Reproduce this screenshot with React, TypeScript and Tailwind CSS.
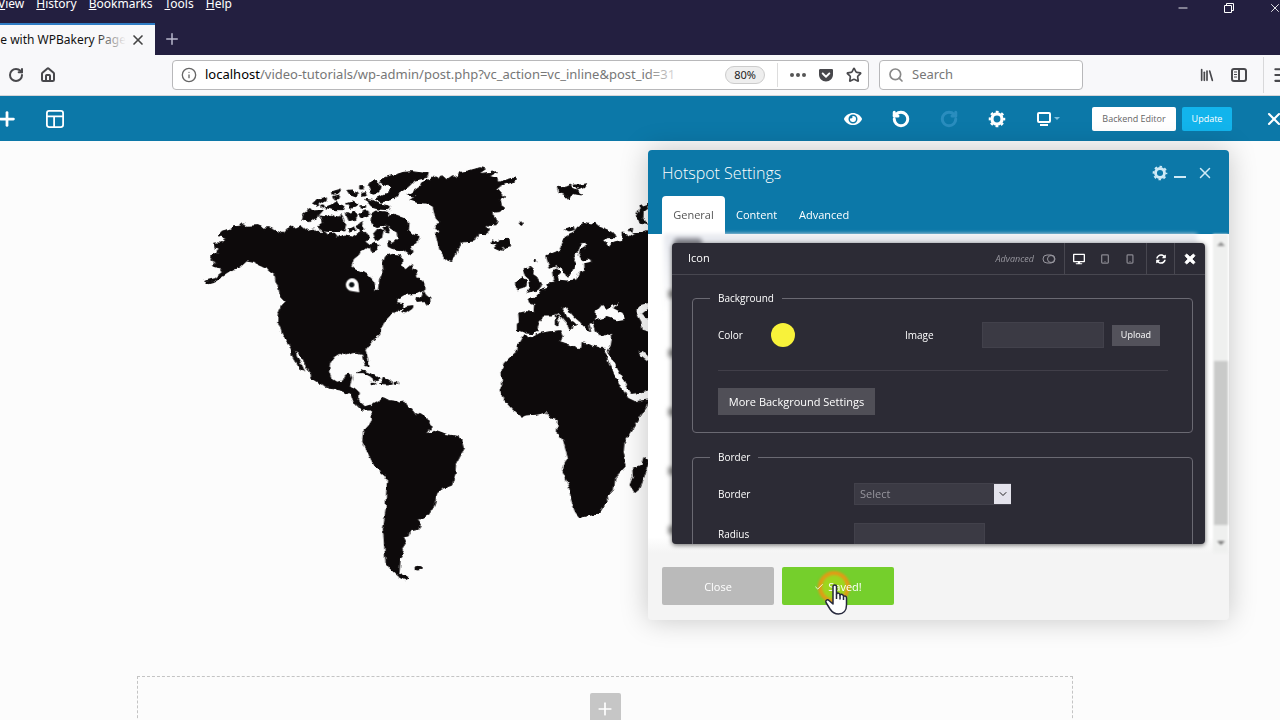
import React from 'react'
import { Check, ChevronDown, Home, Info, Library, Menu, Minus, Plus, RotateCcw, RotateCw, Search, Smartphone, Star, Tablet, X } from 'lucide-react'
import { FaDesktop, FaEye, FaGetPocket, FaSyncAlt, FaTimes } from 'react-icons/fa'

const menuItems = ['View', 'History', 'Bookmarks', 'Tools', 'Help']

const arcticIslands = [
  'M555 75L575 65L600 60L625 52L650 50L700 56L695 68L660 75L640 95L610 115L600 130L560 142L540 132L575 115L592 95L575 92L558 85Z',
  'M530 178L545 168L578 172L584 184L600 178L628 188L642 205L640 225L655 240L672 244L666 264L645 270L654 290L648 300L625 285L600 282L580 275L578 260L592 265L610 250L606 232L590 222L570 208L545 215L528 202Z',
  'M365 214L385 205L380 188L372 182L392 186L410 180L430 190L438 178L444 200L452 208L448 224L415 230L385 228Z',
  'M322 192L328 172L345 160L352 168L384 166L368 184L345 200L330 196Z',
  'M355 146L368 134L394 125L394 134L365 151Z',
  'M378 150L386 150L386 160L378 158Z',
  'M390 157L408 150L424 138L430 148L450 154L446 164L415 164Z',
  'M412 110L432 104L434 114L414 118Z',
  'M413 124L434 120L432 131L416 132Z',
  'M456 106L474 105L487 118L484 126L466 120Z',
  'M455 142L474 138L490 148L484 156L466 160Z',
  'M520 92L530 80L545 76L556 92L550 112L534 118L526 104Z',
  'M512 133L530 136L550 146L586 154L582 164L550 162L528 156Z',
  'M454 172L466 178L480 168L488 182L480 196L462 200Z',
  'M494 178L508 168L522 168L524 178L500 188Z',
  'M460 220L476 212L480 226L464 232Z',
  'M484 212L500 203L508 222L498 232L490 226Z',
  'M494 92L506 92L504 102L494 102Z',
  'M498 112L510 110L514 122L500 124Z',
  'M498 152L512 152L510 160L500 160Z',
  'M524 272L536 264L551 268L546 284L530 290Z',
  'M534 238L550 220L564 226L560 248L540 256Z',
  'M564 216L576 214L582 234L572 232Z',
]

function WorldMap() {
  return (
    <svg viewBox="600 480 1368 1290" className="block h-[430px] w-[456px]" role="img" aria-label="World map">
      <defs>
        <filter id="coast" x="-2%" y="-2%" width="104%" height="104%" colorInterpolationFilters="sRGB">
          <feTurbulence type="fractalNoise" baseFrequency="0.07" numOctaves="1" seed="4" result="noise" />
          <feDisplacementMap in="SourceGraphic" in2="noise" scale="15" xChannelSelector="R" yChannelSelector="G" />
        </filter>
      </defs>
      <g filter="url(#coast)" fill="#0d0a0b" stroke="#0d0a0b" strokeWidth="3" strokeLinejoin="round">
        {/* North America */}
        <g transform="translate(585 465)">
          <path d="M72 242L80 232L100 226L112 216L135 213L145 206L155 214L190 212L200 220L222 218L240 226L262 236L276 222L292 213L302 222L320 214L334 226L356 222L365 232L388 232L395 240L418 234L428 246L450 240L475 244L495 232L512 232L522 250L510 260L525 272L508 284L496 284L490 300L475 312L468 335L488 348L515 358L533 375L538 406L550 406L554 372L566 352L564 324L572 304L590 298L612 300L620 310L620 334L632 344L648 330L652 342L662 345L666 372L680 374L690 386L690 404L664 416L632 418L610 432L604 446L622 448L628 458L604 470L588 478L580 490L566 500L556 520L554 540L536 552L518 575L510 585L518 612L522 634L512 632L504 610L502 595L482 592L470 594L456 600L438 592L418 604L404 622L401 650L408 672L424 682L444 678L452 660L466 657L470 668L463 695L480 702L490 710L487 735L510 755L527 750L524 765L500 765L480 745L468 720L435 705L420 702L405 700L395 694L372 684L350 670L348 654L336 640L324 612L308 592L300 584L304 604L318 626L328 648L318 646L302 622L292 605L290 588L282 568L262 540L258 518L248 505L250 475L260 452L272 440L254 420L252 395L243 382L240 360L222 348L214 338L196 332L176 322L155 318L135 336L120 342L105 350L86 362L60 378L32 385L30 378L60 371L84 352L78 342L58 338L52 330L64 320L48 316L50 304L68 292L72 282L60 280L56 264L80 264L95 252Z" />
          <path d="M666 424L680 428L686 409L692 420L704 430L706 446L698 450L690 440L667 442Z" />
          <path d="M620 470L636 454L654 452L652 460L632 474Z" />
          {arcticIslands.map(d => <path key={d} d={d} />)}
        </g>
        {/* Central and South America */}
        <g transform="translate(1020 1110)">
          <path d="M92 108L105 98L120 92L130 83L148 92L165 94L175 99L195 96L202 108L218 122L228 137L240 130L258 142L270 160L273 172L260 192L276 186L282 180L295 184L322 194L350 199L368 213L373 235L360 256L347 280L345 310L335 346L310 354L290 370L285 395L276 418L264 436L248 446L232 447L242 460L235 478L208 483L205 498L190 500L198 517L183 540L190 552L180 570L178 600L175 618L155 600L138 580L135 540L130 480L138 420L140 370L143 330L135 315L105 290L90 260L78 235L68 215L70 185L88 165L97 150L95 125L80 112Z" />
          <path d="M175 614L190 612L205 622L195 629L178 622Z" />
          <path d="M225 592L240 588L248 594L238 599L226 600Z" />
          <path d="M52 8L65 2L85 8L104 18L120 28L108 32L90 18L70 8Z" />
          <path d="M116 40L130 34L132 25L146 30L158 39L140 42Z" />
          <path d="M90 37L104 37L104 44L92 44ZM163 37L173 37L173 43L163 43Z" />
          <path d="M912 262L925 275L915 310L900 355L885 368L870 345L880 320L878 295L905 285Z" />
        </g>
        {/* Greenland, Europe, Africa */}
        <g transform="translate(1200 465)">
          <path d="M22 120L45 106L60 95L68 82L92 72L104 62L118 72L126 62L140 74L158 62L176 68L182 52L205 48L240 38L256 42L236 56L292 50L268 64L290 70L294 82L345 68L345 78L304 90L292 100L314 126L300 134L304 150L316 158L298 170L276 172L278 184L294 196L288 210L268 208L258 216L272 224L258 236L235 235L220 258L180 262L170 290L155 320L135 312L120 285L108 240L118 222L104 222L108 208L122 205L108 190L100 160L88 145L54 143L30 135L48 124Z" />
          <path d="M272 264L280 254L290 262L302 254L328 253L332 272L310 278L305 286L282 276L288 270Z" />
          <path d="M472 96L484 98L500 96L512 90L516 102L530 104L545 120L522 116L514 122L506 135L492 118L476 112Z" />
          <path d="M522 90L540 90L562 86L554 98L534 104Z" />
          <path d="M358 206L362 197L370 204L364 212Z" />
          <path d="M385 432L410 424L425 405L445 398L440 388L462 385L480 376L500 378L530 375L538 352L555 345L554 326L578 321L560 312L548 318L538 300L540 286L562 272L556 262L542 264L535 285L518 305L526 325L515 350L500 364L490 344L470 332L450 340L444 320L440 302L466 292L480 284L490 260L498 242L520 232L534 215L550 205L575 210L584 201L600 215L640 233L648 248L622 248L612 256L628 276L640 262L668 255L666 234L678 236L684 246L700 236L720 235L744 226L780 228L780 700L744 705L720 712L695 715L680 690L658 650L640 615L625 590L634 570L638 540L618 536L600 540L585 525L580 500L566 506L572 530L556 518L540 500L526 488L510 470L495 452L487 462L500 486L530 510L516 512L512 528L504 508L488 490L474 474L455 480L432 480L418 500L410 526L400 536L380 534L366 528L352 525L352 508L358 498L356 474L380 470L402 473L404 450L388 442Z" />
          <path d="M380 340L392 334L400 342L398 358L410 366L424 392L414 404L382 412L392 396L386 386L394 378L376 362L370 346Z" />
          <path d="M350 378L368 368L380 376L370 400L350 405Z" />
          <path d="M458 352L470 338L480 350L472 366L476 380L462 382Z" />
          <path d="M466 480L474 480L476 492L468 496ZM466 496L476 498L474 512L466 512ZM402 318L408 312L410 322Z" />
          <path d="M744 148L722 155L708 185L720 205L742 208L728 190L730 170L744 160ZM496 222L520 214L522 224L506 228ZM688 222L698 220L696 232Z" />
          <path d="M375 538L384 548L400 546L420 535L450 530L480 527L487 545L480 560L510 570L532 580L545 580L546 562L570 570L600 580L618 580L614 592L628 630L648 670L664 700L684 730L705 740L745 735L740 755L720 785L690 835L672 865L670 890L678 935L645 970L640 1005L622 1024L624 1040L606 1056L592 1078L575 1080L540 1087L528 1073L515 1035L508 995L488 945L492 926L505 910L495 870L490 856L472 835L475 795L450 788L440 770L415 777L380 780L365 787L340 765L324 748L310 730L300 705L308 690L306 650L312 625L332 606L350 590L352 570Z" />
        </g>
        <g fill="#fcfcfc" stroke="none">
          {/* inland seas */}
          <path transform="translate(1200 465)" d="M586 496L588 468L606 446L620 462L655 444L640 460L668 474L674 492L650 496L620 486Z" />
          <path transform="translate(1200 465)" d="M706 468L722 450L744 444L748 458L726 476L744 490L750 530L728 524L724 500Z" />
          <path transform="translate(1200 465)" d="M716 590L728 588L750 610L744 618L724 602Z" />
          <path transform="translate(585 465)" d="M606 434L628 420L668 418L662 430L640 436L644 446L618 446Z" />
        </g>
      </g>
      {/* hotspot marker */}
      <g transform="translate(585 465)">
        <path d="M493 412L470 408A19 19 0 1 1 490 385Z" fill="#fff" />
        <circle cx="470" cy="389" r="8" fill="#0c1316" />
      </g>
    </svg>
  )
}

function Gear({ className }: { className: string }) {
  return (
    <svg viewBox="0 0 20 20" fill="none" stroke="currentColor" className={className} aria-hidden="true">
      <circle cx="10" cy="10" r="5.6" strokeWidth="3.6" />
      <circle cx="10" cy="10" r="8" strokeWidth="2.4" strokeDasharray="3.14" strokeDashoffset="1.57" />
    </svg>
  )
}

function Monitor() {
  return (
    <svg viewBox="0 0 16 16" className="size-4" fill="none" stroke="currentColor" strokeWidth="2" aria-hidden="true">
      <rect x="2" y="2" width="12" height="9" rx="1" />
      <path d="M4 14h8" />
    </svg>
  )
}

function BrowserChrome() {
  return (
    <header className="shrink-0 font-['Noto_Sans',sans-serif]">
      <div className="flex h-[23px] items-start justify-between bg-[#231f40] text-xs text-white">
        <nav className="-ml-0.5 flex gap-3 leading-[8px]">
          {menuItems.map(item => (
            <button key={item}><u>{item[0]}</u>{item.slice(1)}</button>
          ))}
        </nav>
        <div className="-mr-0.5 flex gap-8 pt-px">
          <button aria-label="Minimize"><Minus className="size-3.5" strokeWidth={1.5} /></button>
          <button aria-label="Restore">
            <svg viewBox="0 0 14 14" className="size-3.5" fill="none" stroke="currentColor" aria-hidden="true">
              <path d="M2.5 4.500h7v7h-7zM4.500 4.500v-2h7v7h-2" />
            </svg>
          </button>
          <button aria-label="Close window"><X className="size-3.5" strokeWidth={1.5} /></button>
        </div>
      </div>

      <div className="flex h-8 items-stretch bg-[#231f40]">
        <div className="flex w-[155px] items-center border-t-2 border-[#2f7cc4] bg-[#f8f8fa]">
          <div className="relative flex w-[126px] justify-end overflow-hidden text-xs whitespace-nowrap text-[#111]">
            Page with WPBakery Page
            <span className="absolute inset-y-0 right-0 w-8 bg-linear-to-r from-transparent to-[#f8f8fa]" />
          </div>
          <button aria-label="Close tab" className="ml-1 text-[#444]"><X className="size-4" strokeWidth={2.5} /></button>
        </div>
        <button aria-label="New tab" className="ml-2 text-[#b9b8cc]"><Plus className="size-[18px]" /></button>
      </div>

      <div className="flex h-[41px] items-center border-b border-[#d5d5d8] bg-[#f8f8fa] text-[#48484c]">
        <button aria-label="Reload" className="ml-2"><RotateCw className="size-4" strokeWidth={3} /></button>
        <button aria-label="Home" className="ml-4"><Home className="size-4" strokeWidth={3} /></button>
        <div className="ml-[116px] flex h-[30px] min-w-0 flex-1 items-center rounded-sm border border-[#b8b8ba] bg-white">
          <Info className="mx-2 size-4 shrink-0 text-[#666]" />
          <div className="relative w-[480px] overflow-hidden text-[13px] whitespace-nowrap text-[#777]">
            <span className="text-black">localhost</span>/video-tutorials/wp-admin/post.php?vc_action=vc_inline&amp;post_id=31
            <span className="absolute inset-y-0 right-0 w-10 bg-linear-to-r from-transparent to-white" />
          </div>
          <button className="ml-auto h-[18px] rounded-full border border-[#ccc] bg-[#eee] px-2 text-[11px] leading-4 text-[#222]">80%</button>
          <span className="ml-3 h-6 w-px bg-[#ddd]" />
          <div className="flex items-center gap-3 px-3 pr-1.5">
            <button aria-label="Page actions" className="flex gap-0.5 py-2">
              <i className="size-1 rounded-full bg-[#555]" />
              <i className="size-1 rounded-full bg-[#555]" />
              <i className="size-1 rounded-full bg-[#555]" />
            </button>
            <button aria-label="Save to Pocket"><FaGetPocket className="size-4" /></button>
            <button aria-label="Bookmark this page"><Star className="size-4" strokeWidth={2.5} /></button>
          </div>
        </div>
        <label className="ml-2.5 flex h-[30px] w-[204px] items-center rounded-sm border border-[#b8b8ba] bg-white pl-2">
          <Search className="size-4 text-[#888]" strokeWidth={2.5} />
          <input aria-label="Search" placeholder="Search" className="ml-2 min-w-0 flex-1 text-[13px] outline-none placeholder:text-[#777]" />
        </label>
        <div className="-mr-3 ml-[116px] flex items-center gap-4">
          <button aria-label="Library"><Library className="size-4" strokeWidth={2.5} /></button>
          <button aria-label="Sidebars">
            <svg viewBox="0 0 16 16" className="size-4" fill="none" stroke="currentColor" strokeWidth="2" aria-hidden="true">
              <rect x="1" y="2" width="14" height="12" rx="2" />
              <path d="M8 2v12" />
              <path d="M3 5h3M3 7.500h3M3 10h3" strokeWidth="1" />
            </svg>
          </button>
          <div className="flex items-center gap-2 border-l border-[#d8d8da] py-2 pl-2">
            <button aria-label="Open menu"><Menu className="size-5" strokeWidth={2.5} /></button>
          </div>
        </div>
      </div>
    </header>
  )
}

function EditorBar() {
  return (
    <div className="flex h-[45px] shrink-0 items-center justify-between bg-[#0c78a8] text-white">
      <div className="-ml-1 flex items-center gap-7">
        <button aria-label="Add element"><Plus className="size-[22px]" strokeWidth={3} /></button>
        <button aria-label="Templates">
          <svg viewBox="0 0 20 20" className="size-[18px]" fill="none" stroke="currentColor" strokeWidth="2" aria-hidden="true">
            <rect x="1" y="1" width="18" height="18" rx="2.500" />
            <path d="M1 7h18M9 7v12" />
          </svg>
        </button>
      </div>
      <div className="-mr-1 flex items-center">
        <div className="mr-8 flex items-center gap-[30px]">
          <button aria-label="Preview"><FaEye className="h-4 w-[18px]" /></button>
          <button aria-label="Undo"><RotateCcw className="size-[18px]" strokeWidth={4} /></button>
          <button aria-label="Redo" className="text-[#2a8dbe]"><RotateCw className="size-[18px]" strokeWidth={4} /></button>
          <button aria-label="Page settings"><Gear className="size-[18px]" /></button>
          <button aria-label="Responsive view" className="flex items-center gap-0.5">
            <Monitor />
            <span className="border-x-[3px] border-t-[3px] border-x-transparent border-t-[#7fc0de]" />
          </button>
        </div>
        <button className="h-6 w-[84px] rounded-xs bg-white text-[9px] text-[#666]">Backend Editor</button>
        <button className="ml-1.5 h-6 w-[50px] rounded-xs bg-[#12b4ec] text-[9px]">Update</button>
        <button aria-label="Close editor" className="ml-8"><X className="size-5" strokeWidth={2.5} /></button>
      </div>
    </div>
  )
}

function IconPopup() {
  return (
    <section className="absolute inset-x-6 top-[9px] h-[301px] overflow-hidden rounded bg-[#2c2b35] text-[10px] text-white shadow-[0_1px_5px_rgba(0,0,0,0.6)]">
      <header className="flex h-8 items-stretch border-b border-[#484750]">
        <h3 className="flex flex-1 items-center pl-4 text-[11px]">Icon</h3>
        <button className="flex items-center gap-2 pr-2 text-[9px] text-[#98979f] italic">
          Advanced
          <svg viewBox="0 0 14 10" className="h-2.5 w-3.5" fill="none" stroke="currentColor" aria-hidden="true">
            <rect x="1" y="1" width="12" height="8" rx="4" />
            <circle cx="9" cy="5" r="3.500" />
          </svg>
        </button>
        <div className="flex w-[83px] items-center justify-around border-x border-[#484750] pr-1 text-[#88878f]">
          <button aria-label="Desktop" className="text-white"><FaDesktop className="size-3" /></button>
          <button aria-label="Tablet"><Tablet className="size-2.5" strokeWidth={3} /></button>
          <button aria-label="Phone"><Smartphone className="size-2.5" strokeWidth={3} /></button>
        </div>
        <button aria-label="Reset" className="flex w-7 items-center justify-center border-r border-[#484750]"><FaSyncAlt className="size-2.5" /></button>
        <button aria-label="Close styles" className="flex w-[30px] items-center justify-center"><FaTimes className="size-3.5" stroke="currentColor" strokeWidth={36} /></button>
      </header>

      <div className="space-y-4 px-5 pr-3 pt-[15px]">
        <fieldset className="rounded-sm border border-[#6a6972] px-[25px] pb-[17px] pr-6">
          <legend className="-ml-2 px-2 leading-4">Background</legend>
          <div className="flex h-[65px] items-center border-b border-[#413f49] pb-1.5">
            <div className="flex flex-1 items-center">
              <label htmlFor="bg-color" className="w-[53px]">Color</label>
              <button id="bg-color" aria-label="Background color" className="size-6 rounded-full bg-[#f8f23a]" />
            </div>
            <label htmlFor="bg-image" className="w-[77px]">Image</label>
            <input id="bg-image" className="h-[26px] w-[122px] border border-[#42414b] bg-[#3b3a44]" />
            <button className="mr-2 ml-2 h-[21px] w-12 bg-[#53525b] text-[9px]">Upload</button>
          </div>
          <button className="mt-[17px] h-[27px] w-[157px] bg-[#504f57] pt-0.5 text-[11px]">More Background Settings</button>
        </fieldset>

        <fieldset className="h-40 rounded-sm border border-[#6a6972] px-[25px]">
          <legend className="-ml-2 px-2 leading-4">Border</legend>
          <div className="mt-[18px] flex items-center">
            <label htmlFor="border-style" className="w-[136px]">Border</label>
            <div className="relative">
              <select id="border-style" className="h-[22px] w-[157px] appearance-none border border-[#42414b] bg-[#3b3a44] px-[5px] text-[11px] text-[#96959d]">
                <option>Select</option>
              </select>
              <span className="pointer-events-none absolute inset-y-px right-0 flex w-[17px] items-center justify-center bg-[#e4e3ec] text-[#222]">
                <ChevronDown className="size-3" />
              </span>
            </div>
          </div>
          <div className="mt-[18px] flex items-center">
            <label htmlFor="radius" className="w-[136px]">Radius</label>
            <input id="radius" className="h-[22px] w-[131px] border border-[#42414b] bg-[#3b3a44]" />
          </div>
        </fieldset>
      </div>
    </section>
  )
}

function HotspotDialog() {
  return (
    <div role="dialog" aria-label="Hotspot Settings" className="absolute top-[9px] right-[51px] w-[581px] rounded bg-[#f4f4f4] shadow-[0_0_28px_rgba(0,0,0,0.22)]">
      <header className="rounded-t bg-[#0c78a8] px-3.5 text-white">
        <div className="flex h-[46px] items-center justify-between">
          <h2 className="text-base font-light">Hotspot Settings</h2>
          <div className="flex items-center gap-1.5 pr-px text-[#cfeaf6]">
            <button aria-label="Settings"><Gear className="size-4" /></button>
            <button aria-label="Minimize panel" className="pt-2"><span className="block h-0.5 w-3 bg-current" /></button>
            <button aria-label="Close panel" className="ml-1"><X className="size-[18px]" /></button>
          </div>
        </div>
        <div className="flex h-[38px] text-[11px]">
          <button className="w-[63px] rounded-t bg-white text-[#555]">General</button>
          <button className="px-[11px]">Content</button>
          <button className="px-[11px]">Advanced</button>
        </div>
      </header>

      <div className="relative h-[319px] bg-linear-to-b from-white from-95% to-[#f4f4f4]">
        <div className="mr-8 ml-4 h-20 bg-linear-to-b from-[#e7e9ef] to-white pt-1 pl-2.5 blur-[2px]">
          <span className="block h-2.5 w-7 rounded bg-[#8d8e96]" />
        </div>
        <ul className="absolute top-14 left-5 space-y-[51px] blur-[2px]">
          {[0, 1, 2, 3, 4].map(row => <li key={row} className="h-2 w-3 bg-[#999]" />)}
        </ul>
        <div className="absolute inset-y-0 right-px flex w-[15px] flex-col items-center bg-[#eff0ef] py-2 blur-[1px]">
          <i className="border-x-4 border-b-4 border-x-transparent border-b-[#8a8a8a]" />
          <span className="mt-auto h-[164px] w-3.5 bg-[#c9cac9]" />
          <i className="mt-4 border-x-4 border-t-4 border-x-transparent border-t-[#777]" />
        </div>
        <IconPopup />
      </div>

      <footer className="flex gap-2 px-3.5 pt-3.5 pb-[15px] text-[11px] text-white">
        <button className="h-[38px] w-28 rounded-xs bg-[#bababa] pt-0.5">Close</button>
        <button className="relative flex h-[38px] w-28 items-center justify-center gap-1 rounded-xs bg-[#75cf2c] pt-0.5">
          <span className="absolute top-1 left-9 size-8 rounded-full border-4 border-[#e39a16] bg-[#b7da18]/60 blur-[1px]" />
          <Check className="relative size-2.5" />
          <span className="relative">Saved!</span>
          {/* pointer */}
          <svg viewBox="0 0 24 32" className="absolute top-4 left-[42px] h-8 w-6" aria-hidden="true">
            <path d="M9 3.500C9 1.500 12.500 1.500 12.500 3.500V11C13.500 9.500 16 10 16 12C17 10.800 19.500 11.300 19.500 13.300C20.800 12.500 22.500 13 22.500 15V22C22.500 27.500 19.500 31 14.500 31C10 31 8 29 6 26L2 19.500C1 17.500 3.500 16 5 17.500L9 21Z" fill="#fff" stroke="#26283c" strokeWidth="1.500" strokeLinejoin="round" />
            <path d="M12.500 11v5M16 12v4.500M19.500 13.500v3.500" stroke="#26283c" strokeWidth="1.500" />
          </svg>
        </button>
      </footer>
    </div>
  )
}

export default function App() {
  return (
    <div className="flex h-screen flex-col overflow-hidden bg-[#fcfcfc] font-['Open_Sans',sans-serif]">
      <BrowserChrome />
      <EditorBar />
      <main className="relative min-h-0 flex-1">
        <div className="mr-[70px] pt-[19px]">
          <div className="mx-auto w-full max-w-[936px]">
            <div className="pl-[63px]"><WorldMap /></div>
            <div className="mt-[86px] flex h-24 items-start justify-center border border-dashed border-[#c4c4c4] pt-4">
              <button aria-label="Add row" className="flex size-[31px] items-center justify-center rounded-xs bg-[#c6c6c6] text-white"><Plus className="size-5" /></button>
            </div>
          </div>
        </div>
        <HotspotDialog />
      </main>
    </div>
  )
}
